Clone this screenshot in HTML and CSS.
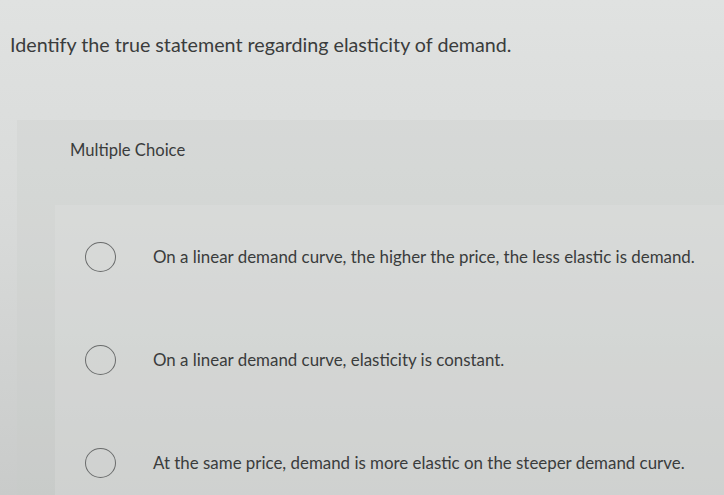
FILE: index.html
```html
<!DOCTYPE html>
<html>
<head>
<meta charset="utf-8">
<link rel="stylesheet" href="styles.css">
</head>
<body>
<div class="page">
  <h1 class="question">Identify the true statement regarding elasticity of demand.</h1>
  <section class="card">
    <div class="card-label">Multiple Choice</div>
    <ul class="options">
      <li class="option"><span class="radio"></span><span class="opt-text">On a linear demand curve, the higher the price, the less elastic is demand.</span></li>
      <li class="option"><span class="radio"></span><span class="opt-text">On a linear demand curve, elasticity is constant.</span></li>
      <li class="option"><span class="radio"></span><span class="opt-text">At the same price, demand is more elastic on the steeper demand curve.</span></li>
    </ul>
  </section>
</div>
</body>
</html>
```
FILE: styles.css
```css
html, body {
  margin: 0;
  padding: 0;
  height: 100%;
}
body {
  background: linear-gradient(180deg, #e0e2e1 0%, #d8dad9 45%, #c9cbca 100%);
  font-family: Lato, "Open Sans", sans-serif;
  color: #3a3c3c;
  overflow: hidden;
}
.page {
  padding-top: 33px;
}
.question {
  margin: 0 0 0 10px;
  font-size: 19.7px;
  font-weight: 400;
  line-height: 24px;
}
.card {
  margin: 63px 0 0 17px;
  background: rgba(200, 202, 201, 0.25);
  padding-top: 20px;
}
.card-label {
  margin-left: 53px;
  font-size: 16.6px;
  line-height: 20px;
}
.options {
  list-style: none;
  margin: 45px 0 0 38px;
  padding: 0;
}
.option {
  display: flex;
  align-items: center;
  height: 103px;
  background: rgba(230, 232, 231, 0.22);
}
.radio {
  width: 29px;
  height: 28px;
  border: 1.5px solid #6a6c6c;
  border-radius: 50%;
  margin-left: 30px;
  flex: none;
}
.opt-text {
  margin-left: 37px;
  font-size: 16.9px;
}
```
